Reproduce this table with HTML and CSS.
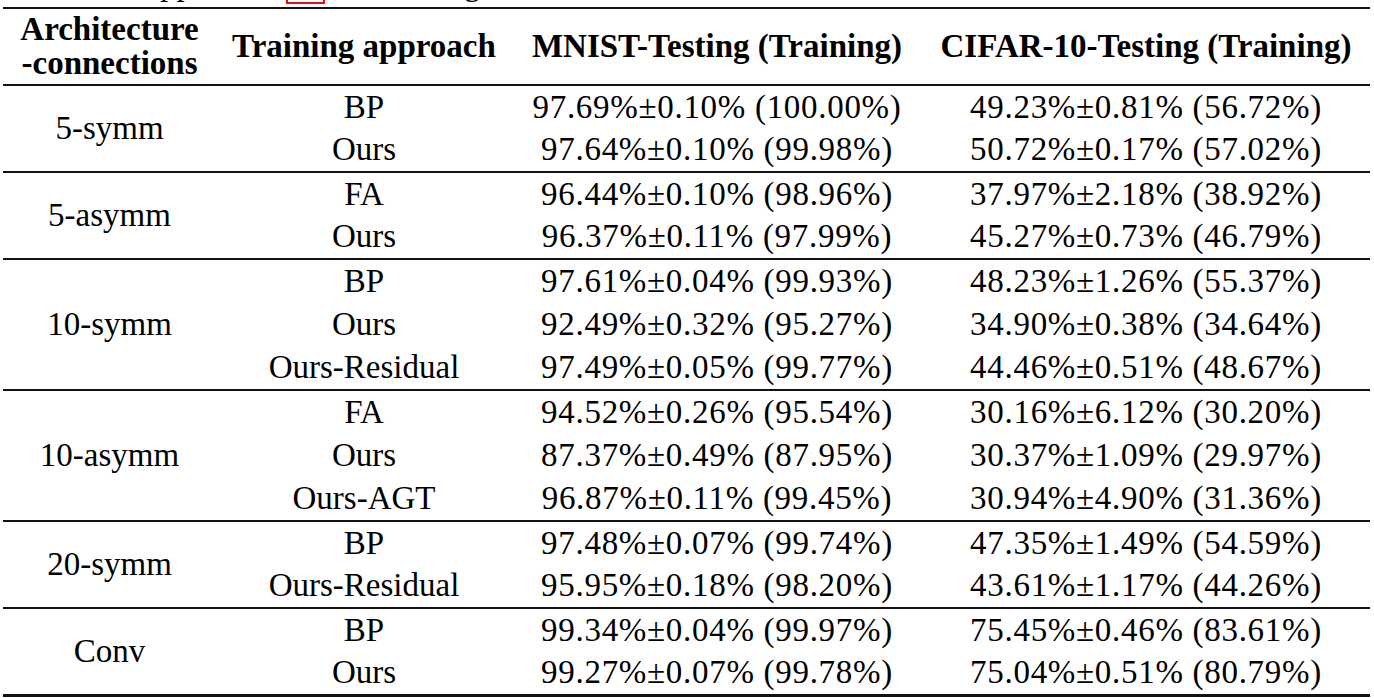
FILE: index.html
```html
<!DOCTYPE html>
<html>
<head>
<meta charset="utf-8">
<link rel="stylesheet" href="styles.css">
</head>
<body>
<div class="caption"><span class="cap-text">and the approach [<span class="cite">29</span>] in training</span></div>
<table class="results">
  <colgroup>
    <col class="c1"><col class="c2"><col class="c3"><col class="c4">
  </colgroup>
  <thead>
    <tr>
      <th>Architecture<br>-connections</th>
      <th>Training approach</th>
      <th>MNIST-Testing (Training)</th>
      <th>CIFAR-10-Testing (Training)</th>
    </tr>
  </thead>
  <tbody>
    <tr><td rowspan="2">5-symm</td><td>BP</td><td class="num">97.69%±0.10% (100.00%)</td><td class="num">49.23%±0.81% (56.72%)</td></tr>
    <tr><td>Ours</td><td class="num">97.64%±0.10% (99.98%)</td><td class="num">50.72%±0.17% (57.02%)</td></tr>
  </tbody>
  <tbody>
    <tr><td rowspan="2">5-asymm</td><td>FA</td><td class="num">96.44%±0.10% (98.96%)</td><td class="num">37.97%±2.18% (38.92%)</td></tr>
    <tr><td>Ours</td><td class="num">96.37%±0.11% (97.99%)</td><td class="num">45.27%±0.73% (46.79%)</td></tr>
  </tbody>
  <tbody class="tall">
    <tr><td rowspan="3">10-symm</td><td>BP</td><td class="num">97.61%±0.04% (99.93%)</td><td class="num">48.23%±1.26% (55.37%)</td></tr>
    <tr><td>Ours</td><td class="num">92.49%±0.32% (95.27%)</td><td class="num">34.90%±0.38% (34.64%)</td></tr>
    <tr><td>Ours-Residual</td><td class="num">97.49%±0.05% (99.77%)</td><td class="num">44.46%±0.51% (48.67%)</td></tr>
  </tbody>
  <tbody class="tall">
    <tr><td rowspan="3">10-asymm</td><td>FA</td><td class="num">94.52%±0.26% (95.54%)</td><td class="num">30.16%±6.12% (30.20%)</td></tr>
    <tr><td>Ours</td><td class="num">87.37%±0.49% (87.95%)</td><td class="num">30.37%±1.09% (29.97%)</td></tr>
    <tr><td>Ours-AGT</td><td class="num">96.87%±0.11% (99.45%)</td><td class="num">30.94%±4.90% (31.36%)</td></tr>
  </tbody>
  <tbody>
    <tr><td rowspan="2">20-symm</td><td>BP</td><td class="num">97.48%±0.07% (99.74%)</td><td class="num">47.35%±1.49% (54.59%)</td></tr>
    <tr><td>Ours-Residual</td><td class="num">95.95%±0.18% (98.20%)</td><td class="num">43.61%±1.17% (44.26%)</td></tr>
  </tbody>
  <tbody class="last">
    <tr><td rowspan="2">Conv</td><td>BP</td><td class="num">99.34%±0.04% (99.97%)</td><td class="num">75.45%±0.46% (83.61%)</td></tr>
    <tr><td>Ours</td><td class="num">99.27%±0.07% (99.78%)</td><td class="num">75.04%±0.51% (80.79%)</td></tr>
  </tbody>
</table>
</body>
</html>
```
FILE: styles.css
```css
html, body {
  margin: 0;
  padding: 0;
  background: #fff;
}
body {
  font-family: "Liberation Serif", "Times New Roman", serif;
  color: #000;
  overflow: hidden;
}
.caption {
  height: 7px;
  overflow: hidden;
  font-size: 33px;
  line-height: 36px;
  padding-left: 41px;
  white-space: nowrap;
}
.cap-text {
  display: block;
  margin-top: -34px;
}
.cite {
  border: 2px solid #e01010;
  padding: 0 1px;
}
.results {
  border-collapse: collapse;
  table-layout: fixed;
  width: 1367px;
  margin-left: 3px;
  font-size: 33px;
}
.c1 { width: 213px; }
.c2 { width: 296px; }
.c3 { width: 410px; }
.c4 { width: 448px; }
.results thead th {
  border-top: 2px solid #111;
  border-bottom: 2px solid #111;
  height: 73px;
  padding: 0 0 2px 0;
  font-weight: bold;
  line-height: 34px;
  text-align: center;
  vertical-align: middle;
}
.results tbody {
  border-bottom: 2px solid #111;
}
.results tbody.last {
  border-bottom-width: 3px;
}
.results td {
  padding: 0;
  height: 42.5px;
  text-align: center;
  vertical-align: middle;
  white-space: nowrap;
}
.results tbody.tall td {
  height: 43px;
}
.results td.num {
  letter-spacing: 0.7px;
}
```
